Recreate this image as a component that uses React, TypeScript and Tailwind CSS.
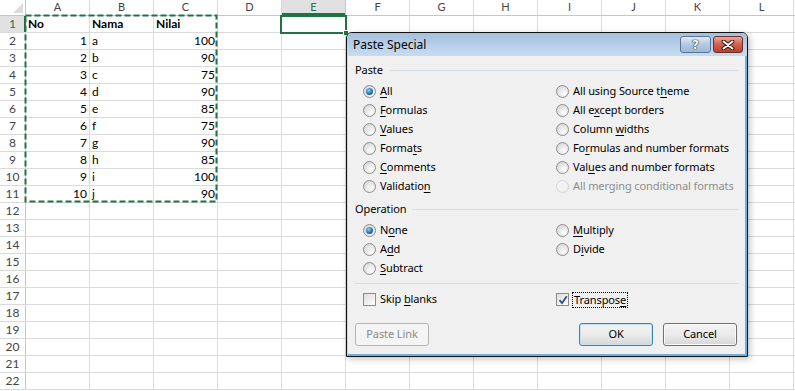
import React from 'react';

const cols = ['A', 'B', 'C', 'D', 'E', 'F', 'G', 'H', 'I', 'J', 'K', 'L', ''];

type Row = { n: number; a?: string; b?: string; c?: string; head?: boolean };

const data: Row[] = [
  { n: 1, a: 'No', b: 'Nama', c: 'Nilai', head: true },
  { n: 2, a: '1', b: 'a', c: '100' },
  { n: 3, a: '2', b: 'b', c: '90' },
  { n: 4, a: '3', b: 'c', c: '75' },
  { n: 5, a: '4', b: 'd', c: '90' },
  { n: 6, a: '5', b: 'e', c: '85' },
  { n: 7, a: '6', b: 'f', c: '75' },
  { n: 8, a: '7', b: 'g', c: '90' },
  { n: 9, a: '8', b: 'h', c: '85' },
  { n: 10, a: '9', b: 'i', c: '100' },
  { n: 11, a: '10', b: 'j', c: '90' },
];
for (let i = 12; i <= 22; i++) data.push({ n: i });

const Sheet = () => (
  <div className="flex flex-col font-['Lato','Liberation_Sans',sans-serif] text-[12px] text-black">
    {/* column headers */}
    <div className="flex h-[16px] shrink-0 border-b border-[#c6c6c6]">
      <div className="relative w-[26px] shrink-0 border-r border-[#c6c6c6] bg-white">
        <div className="absolute right-[2px] bottom-[2px] w-0 h-0 border-l-[10px] border-l-transparent border-b-[10px] border-b-[#dcdcdc]" />
      </div>
      {cols.map((c, i) =>
        c === 'E' ? (
          <div
            key={i}
            className="w-[64px] shrink-0 border-r border-[#c6c6c6] bg-[#e1e1e1] flex items-center justify-center text-[11px] text-[#217346] shadow-[inset_0_-2px_0_#217346]"
          >
            {c}
          </div>
        ) : (
          <div
            key={i}
            className="w-[64px] shrink-0 border-r border-[#dadada] bg-white flex items-center justify-center text-[11px] text-[#444]"
          >
            {c}
          </div>
        )
      )}
    </div>
    {data.map((r) => (
      <div key={r.n} className="flex h-[17px] shrink-0 border-b border-[#dadada] leading-[16px]">
        <div
          className={`w-[26px] shrink-0 border-r flex items-center justify-center text-[12px] ${
            r.n === 1
              ? 'bg-[#e1e1e1] text-[#217346] border-[#217346] shadow-[inset_-1px_0_0_#217346]'
              : 'bg-white text-[#444] border-[#c6c6c6]'
          }`}
        >
          {r.n}
        </div>
        <div
          className={`w-[64px] shrink-0 border-r border-[#dadada] flex items-center px-[2px] ${
            r.head ? 'font-bold justify-start' : 'justify-end'
          }`}
        >
          {r.a}
        </div>
        <div
          className={`w-[64px] shrink-0 border-r border-[#dadada] flex items-center px-[2px] ${
            r.head ? 'font-bold' : ''
          }`}
        >
          {r.b}
        </div>
        <div
          className={`w-[64px] shrink-0 border-r border-[#dadada] flex items-center px-[2px] ${
            r.head ? 'font-bold justify-start' : 'justify-end'
          }`}
        >
          {r.c}
        </div>
        {cols.slice(3).map((c, i) => (
          <div key={i} className="w-[64px] shrink-0 border-r border-[#dadada]" />
        ))}
      </div>
    ))}
  </div>
);

const Radio = ({ checked, disabled }: { checked?: boolean; disabled?: boolean }) => (
  <span
    className={`w-[13px] h-[13px] rounded-full border shrink-0 flex items-center justify-center ${
      disabled
        ? 'border-[#d2d2d2] bg-[#f3f3f3]'
        : 'border-[#8c8c8c] bg-[radial-gradient(circle_at_65%_70%,#ffffff,#dcdcdc_70%)]'
    }`}
  >
    {checked && (
      <span className="w-[7px] h-[7px] rounded-full bg-[radial-gradient(circle_at_40%_35%,#8fd0f8,#1d6aa8_60%,#0f3f6e)]" />
    )}
  </span>
);

const Check = ({ checked }: { checked?: boolean }) => (
  <span className="w-[13px] h-[13px] border border-[#8c8c8c] shrink-0 bg-[linear-gradient(135deg,#dcdcdc,#ffffff)] flex items-center justify-center">
    {checked && (
      <svg width="10" height="10" viewBox="0 0 10 10">
        <path d="M1.5 5.2 L4 8 L8.8 1.2" fill="none" stroke="#2c4f8f" strokeWidth="1.8" />
      </svg>
    )}
  </span>
);

// label with underlined access key (k < 0 means none)
const Lbl = ({ t, k, dim }: { t: string; k: number; dim?: boolean }) =>
  k < 0 ? (
    <span className={`whitespace-nowrap ${dim ? 'text-[#8d8d8d]' : ''}`}>{t}</span>
  ) : (
    <span className={`whitespace-nowrap ${dim ? 'text-[#8d8d8d]' : ''}`}>
      {t.slice(0, k)}
      <span className="underline underline-offset-2">{t[k]}</span>
      {t.slice(k + 1)}
    </span>
  );

const Opt = ({ t, k, checked, disabled }: { t: string; k: number; checked?: boolean; disabled?: boolean }) => (
  <div className="h-[19px] flex items-center gap-[4px]">
    <Radio checked={checked} disabled={disabled} />
    <Lbl t={t} k={disabled ? -1 : k} dim={disabled} />
  </div>
);

const GroupHead = ({ title }: { title: string }) => (
  <div className="h-[16px] flex items-center">
    <span>{title}</span>
    <div className="flex-1 h-px bg-[#d5dfe5] ml-[6px]" />
  </div>
);

const Dialog = () => (
  <div className="absolute left-[346px] top-[32px] w-[402px] h-[325px] border border-[#111] rounded-t-[6px] flex flex-col overflow-hidden font-['Noto_Sans','Open_Sans',sans-serif] text-[11px] tracking-[-0.1px] text-black shadow-[2px_2px_6px_rgba(0,0,0,0.25)]">
    <div className="h-[23px] shrink-0 flex items-center pl-[6px] pr-[4px] bg-[linear-gradient(#a4bfdc,#bad2ea_60%,#c6dbf0)]">
      <span className="text-[12px] tracking-normal">Paste Special</span>
      <div className="ml-auto flex gap-[2px]">
        <div className="w-[31px] h-[17px] rounded-[3px] border border-[#5a7594] bg-[linear-gradient(#dfeaf6,#b3c9e2_50%,#9db8d8)] flex items-center justify-center">
          <span className="font-['DejaVu_Sans',sans-serif] font-bold text-[12px] leading-none text-white [text-shadow:0_0_1px_#1c2d44,0_0_1px_#1c2d44,0_0_1px_#1c2d44]">?</span>
        </div>
        <div className="w-[30px] h-[17px] rounded-[3px] border border-[#6d2e27] bg-[linear-gradient(#e9a99c,#d0604e_50%,#b8422f)] flex items-center justify-center">
          <svg width="14" height="10" viewBox="0 0 14 10">
            <path d="M2.5 1.5 L11.5 8.5 M11.5 1.5 L2.5 8.5" stroke="#3b1712" strokeWidth="4" strokeLinecap="round" />
            <path d="M2.5 1.5 L11.5 8.5 M11.5 1.5 L2.5 8.5" stroke="#ffffff" strokeWidth="2" strokeLinecap="round" />
          </svg>
        </div>
      </div>
    </div>
    <div className="flex-1 flex flex-col bg-[#f0f0f0] border-l border-l-[#c0d6ec] border-r-2 border-r-[#6db0e0] border-b-2 border-b-[#6db0e0] pl-[7px] pr-[6px] pt-[6px]">
      <GroupHead title="Paste" />
      <div className="flex pl-[8px] mt-[4px]">
        <div className="w-[193px] shrink-0 flex flex-col">
          <Opt t="All" k={0} checked />
          <Opt t="Formulas" k={0} />
          <Opt t="Values" k={0} />
          <Opt t="Formats" k={5} />
          <Opt t="Comments" k={0} />
          <Opt t="Validation" k={9} />
        </div>
        <div className="flex flex-col">
          <Opt t="All using Source theme" k={18} />
          <Opt t="All except borders" k={5} />
          <Opt t="Column widths" k={7} />
          <Opt t="Formulas and number formats" k={2} />
          <Opt t="Values and number formats" k={3} />
          <Opt t="All merging conditional formats" k={0} disabled />
        </div>
      </div>
      <div className="mt-[5px]">
        <GroupHead title="Operation" />
      </div>
      <div className="flex pl-[8px] mt-[4px]">
        <div className="w-[193px] shrink-0 flex flex-col">
          <Opt t="None" k={1} checked />
          <Opt t="Add" k={1} />
          <Opt t="Subtract" k={0} />
        </div>
        <div className="flex flex-col">
          <Opt t="Multiply" k={0} />
          <Opt t="Divide" k={1} />
        </div>
      </div>
      <div className="h-px bg-[#d5dfe5] mt-[5px]" />
      <div className="flex pl-[8px] mt-[6px]">
        <div className="w-[193px] shrink-0 h-[19px] flex items-center gap-[4px]">
          <Check />
          <Lbl t="Skip blanks" k={5} />
        </div>
        <div className="h-[19px] flex items-center gap-[3px]">
          <Check checked />
          <span className="border border-dotted border-black px-[1px] leading-[14px]">
            <Lbl t="Transpose" k={8} />
          </span>
        </div>
      </div>
      <div className="flex items-center mt-[14px] pr-[2px]">
        <div className="w-[74px] h-[23px] rounded-[3px] border border-[#b5b5b5] bg-[#f4f4f4] flex items-center justify-center text-[#8a8a8a]">
          Paste Link
        </div>
        <div className="ml-auto w-[74px] h-[23px] rounded-[3px] border border-[#3c7fb1] bg-[linear-gradient(#f2f2f2,#ebebeb_50%,#d6d6d6)] shadow-[inset_0_0_0_1px_#c4e5f6] flex items-center justify-center">
          OK
        </div>
        <div className="ml-[10px] w-[74px] h-[23px] rounded-[3px] border border-[#707070] bg-[linear-gradient(#f2f2f2,#ebebeb_50%,#d6d6d6)] shadow-[inset_0_0_0_1px_#fbfbfb] flex items-center justify-center">
          Cancel
        </div>
      </div>
    </div>
  </div>
);

export default function App() {
  return (
    <div className="relative w-[795px] h-[391px] overflow-hidden bg-white">
      <Sheet />
      {/* copy marquee around A1:C11 */}
      <svg className="absolute left-0 top-0" width="795" height="391">
        <rect x="25.5" y="15.5" width="191" height="186" fill="none" stroke="#217346" strokeWidth="2" strokeDasharray="6 3" />
      </svg>
      {/* active cell E1 */}
      <div className="absolute left-[280px] top-[15px] w-[67px] h-[19px] border-2 border-[#217346]" />
      <div className="absolute left-[343px] top-[30px] w-[6px] h-[6px] bg-[#217346] border border-white" />
      <Dialog />
    </div>
  );
}
